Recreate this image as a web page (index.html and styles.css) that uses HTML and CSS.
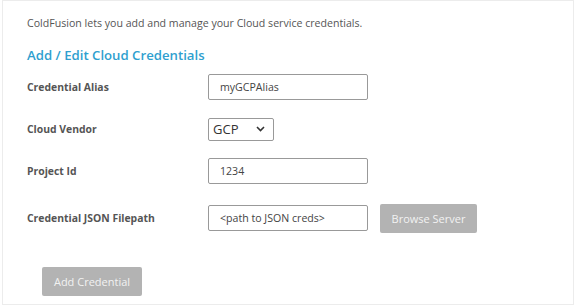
FILE: index.html
```html
<!DOCTYPE html>
<html lang="en">
<head>
    <meta charset="UTF-8">
    <title>Cloud Credentials</title>
    <link rel="stylesheet" href="styles.css">
</head>
<body>
    <div class="page">
        <p class="intro">ColdFusion lets you add and manage your Cloud service credentials.</p>
        <h2>Add / Edit Cloud Credentials</h2>

        <form class="cred-form">
            <div class="row">
                <label>Credential Alias</label>
                <input type="text" class="field" value="myGCPAlias">
            </div>
            <div class="row">
                <label>Cloud Vendor</label>
                <div class="select">
                    <span>GCP</span>
                    <svg width="9" height="6" viewBox="0 0 9 6"><path d="M1 1 L4.5 4.5 L8 1" fill="none" stroke="#333" stroke-width="1.6"/></svg>
                </div>
            </div>
            <div class="row">
                <label>Project Id</label>
                <input type="text" class="field" value="1234">
            </div>
            <div class="row row-path">
                <label>Credential JSON Filepath</label>
                <input type="text" class="field" value="<path to JSON creds>">
                <button type="button" class="btn">Browse Server</button>
            </div>

            <button type="button" class="btn btn-add">Add Credential</button>
        </form>
    </div>
</body>
</html>
```

FILE: styles.css
```css
* {
    margin: 0;
    padding: 0;
    box-sizing: border-box;
}

body {
    font-family: "Open Sans", "Liberation Sans", sans-serif;
    background: #ffffff;
    color: #555555;
}

.page {
    margin-left: 2px;
    width: 572px;
    height: 305px;
    border: 1px solid #ececec;
    padding: 14px 0 0 24px;
}

.intro {
    font-size: 10.6px;
    line-height: 16px;
    color: #555555;
}

h2 {
    margin-top: 14px;
    font-size: 13.2px;
    line-height: 20px;
    font-weight: 600;
    color: #2f9fcf;
}

.cred-form {
    margin-top: 9px;
}

.row {
    display: flex;
    align-items: center;
    height: 26px;
    margin-bottom: 16px;
}

.row label {
    width: 181px;
    font-size: 10.4px;
    font-weight: 700;
    color: #555555;
}

.field {
    width: 160px;
    height: 26px;
    border: 1px solid #999999;
    border-radius: 2px;
    padding: 0 11px;
    font-family: inherit;
    font-size: 10.6px;
    color: #444444;
    outline: none;
}

.select {
    width: 66px;
    height: 23px;
    border: 1px solid #999999;
    border-radius: 2px;
    display: flex;
    align-items: center;
    justify-content: space-between;
    padding: 0 8px 0 4px;
    font-size: 13px;
    color: #333333;
}

.row-path {
    margin-top: 21px;
}

.btn {
    background: #b3b3b3;
    color: #f2f2f2;
    border: none;
    border-radius: 2px;
    font-family: inherit;
    font-size: 11px;
    height: 29px;
    padding: 0 4px;
    white-space: nowrap;
}

.row-path .btn {
    margin-left: 12px;
    width: 97px;
}

.btn-add {
    margin-top: 20px;
    margin-left: 15px;
    width: 100px;
}
```
